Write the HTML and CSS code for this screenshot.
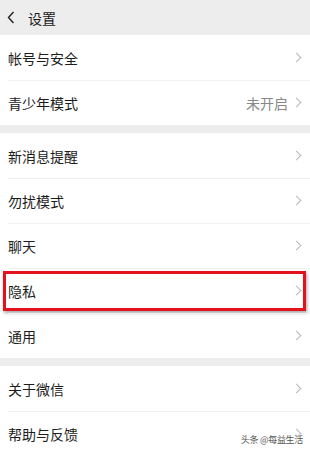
FILE: index.html
```html
<!DOCTYPE html>
<html lang="zh">
<head>
<meta charset="utf-8">
<link rel="stylesheet" href="styles.css">
</head>
<body>
<div class="page">
  <header class="bar">
    <svg class="back" width="8" height="13" viewBox="0 0 8 13"><path d="M6.5 1 L1.5 6.5 L6.5 12" fill="none" stroke="#222" stroke-width="1.4"/></svg>
    <span class="title">设置</span>
  </header>
  <section class="group">
    <div class="row"><span class="label">帐号与安全</span><span class="chev"></span></div>
    <div class="row"><span class="label">青少年模式</span><span class="val">未开启</span><span class="chev"></span></div>
  </section>
  <section class="group">
    <div class="row"><span class="label">新消息提醒</span><span class="chev"></span></div>
    <div class="row"><span class="label">勿扰模式</span><span class="chev"></span></div>
    <div class="row"><span class="label">聊天</span><span class="chev"></span></div>
    <div class="row hl"><span class="label">隐私</span><span class="chev"></span><span class="box"></span></div>
    <div class="row"><span class="label">通用</span><span class="chev"></span></div>
  </section>
  <section class="group">
    <div class="row"><span class="label">关于微信</span><span class="chev"></span></div>
    <div class="row"><span class="label">帮助与反馈</span><span class="chev"></span></div>
  </section>
  <span class="mark">头条 @每益生活</span>
</div>
</body>
</html>
```
FILE: styles.css
```css
* { box-sizing: border-box; margin: 0; padding: 0; }
html, body { width: 310px; height: 450px; overflow: hidden; background: #ededed; }
body { font-family: "Noto Sans CJK SC", "Noto Sans", sans-serif; color: #1c1c1c; }
.page { position: relative; width: 310px; height: 450px; }
.bar { height: 35px; display: flex; align-items: center; padding-left: 7px; background: #ededed; }
.back { margin-right: 13px; }
.title { font-size: 14px; color: #1a1a1a; }
.group { background: #fff; margin-bottom: 8px; }
.row { position: relative; height: 45px; display: flex; align-items: center; padding: 0 9px 0 8px; font-size: 14px; }
.row + .row::before { content: ""; position: absolute; left: 8px; right: 0; top: 0; height: 1px; background: #efefef; }
.label { flex: 1; }
.val { color: #888; font-size: 14px; margin-right: 5px; }
.chev { width: 7px; height: 7px; border-top: 1px solid #b8b8b8; border-right: 1px solid #b8b8b8; transform: rotate(45deg); margin-right: 1px; }
.box { position: absolute; left: 3px; right: 4px; top: 3px; bottom: 2px; border: 3px solid #e3121c; box-shadow: 1px 2px 3px rgba(0,0,0,0.35); }
.mark { position: absolute; right: 7px; bottom: 4px; font-size: 9px; letter-spacing: -0.3px; color: #555; text-shadow: 0 0 2px #fff, 0 0 2px #fff; }
```
